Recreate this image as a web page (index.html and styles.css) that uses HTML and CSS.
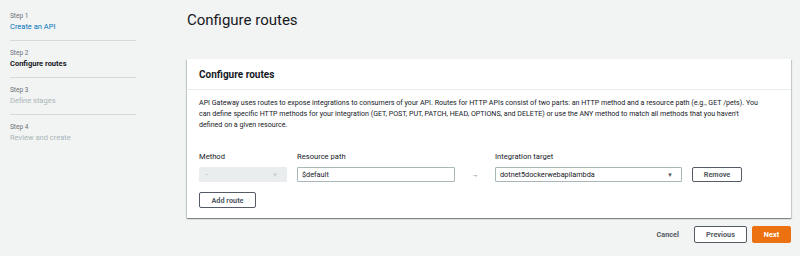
FILE: index.html
```html
<!DOCTYPE html>
<html lang="en">
<head>
  <meta charset="UTF-8" />
  <title>Configure routes</title>
  <link rel="stylesheet" href="styles.css">
</head>
<body>

  <!-- Passos do assistente -->
  <nav class="passos">
    <div class="passo">
      <div class="passo-num">Step 1</div>
      <a class="passo-nome link" href="#">Create an API</a>
    </div>
    <div class="passo">
      <div class="passo-num">Step 2</div>
      <div class="passo-nome atual">Configure routes</div>
    </div>
    <div class="passo">
      <div class="passo-num">Step 3</div>
      <div class="passo-nome inativo">Define stages</div>
    </div>
    <div class="passo ultimo">
      <div class="passo-num">Step 4</div>
      <div class="passo-nome inativo">Review and create</div>
    </div>
  </nav>

  <main class="conteudo">
    <h1 class="titulo">Configure routes</h1>

    <section class="cartao">
      <div class="cartao-topo">Configure routes</div>
      <div class="cartao-corpo">
        <p class="descricao">
          API Gateway uses routes to expose integrations to consumers of your API. Routes for HTTP APIs consist of two parts: an HTTP method and a resource path (e.g., GET /pets). You<br>
          can define specific HTTP methods for your integration (GET, POST, PUT, PATCH, HEAD, OPTIONS, and DELETE) or use the ANY method to match all methods that you haven't<br>
          defined on a given resource.
        </p>

        <div class="rotas">
          <label class="rotulo">Method</label>
          <label class="rotulo">Resource path</label>
          <span></span>
          <label class="rotulo">Integration target</label>
          <span></span>

          <div class="campo seletor desativado">
            <span>-</span>
            <span class="seta">&#9660;</span>
          </div>
          <div class="campo">$default</div>
          <div class="flecha">&rarr;</div>
          <div class="campo seletor">
            <span>dotnet5dockerwebapilambda</span>
            <span class="seta">&#9660;</span>
          </div>
          <button class="botao">Remove</button>
        </div>

        <button class="botao adicionar">Add route</button>
      </div>
    </section>

    <div class="rodape">
      <button class="botao-link">Cancel</button>
      <button class="botao anterior">Previous</button>
      <button class="botao primario">Next</button>
    </div>
  </main>

</body>
</html>
```

FILE: styles.css
```css
body {
  margin: 0;
  padding: 0;
  background-color: #f2f3f3;
  font-family: Roboto, "Open Sans", Arial, sans-serif;
  color: #16191f;
  display: flex;
  height: 256px;
  overflow: hidden;
}

/* Passos */
.passos {
  width: 126px;
  padding: 4px 0 0 10px;
  flex-shrink: 0;
}

.passo {
  padding: 7px 0 8px;
  border-bottom: 1px solid #d5dbdb;
}

.passo.ultimo {
  border-bottom: none;
}

.passo-num {
  font-size: 6.5px;
  line-height: 10px;
  color: #687078;
}

.passo-nome {
  display: block;
  font-size: 7.5px;
  line-height: 11px;
  text-decoration: none;
}

.passo-nome.link {
  color: #0073bb;
}

.passo-nome.atual {
  font-weight: bold;
  color: #16191f;
}

.passo-nome.inativo {
  color: #aab7b8;
}

/* Conteudo */
.conteudo {
  flex: 1;
  padding: 0 9px 0 51px;
}

.titulo {
  margin: 10px 0 29px;
  font-size: 15px;
  line-height: 20px;
  font-weight: normal;
  color: #16191f;
}

.cartao {
  background: white;
  box-shadow: 0 1px 1px 0 rgba(0, 28, 36, 0.3), 1px 1px 1px 0 rgba(0, 28, 36, 0.15), -1px 1px 1px 0 rgba(0, 28, 36, 0.15);
}

.cartao-topo {
  padding: 10px 12px 9px;
  line-height: 11px;
  font-size: 10px;
  font-weight: bold;
  border-bottom: 1px solid #eaeded;
}

.cartao-corpo {
  padding: 7px 12px 10px;
}

.descricao {
  margin: 0 0 22px;
  font-size: 7.1px;
  line-height: 11px;
  color: #16191f;
  white-space: nowrap;
}

.rotas {
  display: grid;
  grid-template-columns: 88px 158px 20px 187px 50px;
  column-gap: 10px;
  row-gap: 5px;
  align-items: center;
}

.rotulo {
  font-size: 7.6px;
  line-height: 10px;
  color: #16191f;
}

.campo {
  box-sizing: border-box;
  height: 15px;
  border: 1px solid #aab7b8;
  border-radius: 1px;
  padding: 0 4px;
  font-size: 7.3px;
  line-height: 13px;
  color: #16191f;
  background: white;
}

.seletor {
  display: flex;
  justify-content: space-between;
}

.seta {
  font-size: 6px;
  color: #545b64;
  margin-right: 4px;
}

.desativado {
  background: #eaeded;
  border-color: #eaeded;
  color: #aab7b8;
  padding-left: 6px;
}

.desativado .seta {
  color: #c6cccc;
}

.flecha {
  text-align: center;
  font-size: 7px;
  color: #545b64;
}

.botao {
  box-sizing: border-box;
  height: 15px;
  background: white;
  border: 1px solid #545b64;
  border-radius: 2px;
  font-family: inherit;
  font-size: 7.3px;
  font-weight: bold;
  color: #545b64;
  padding: 0;
  cursor: pointer;
}

.adicionar {
  margin-top: 10px;
  width: 57px;
  height: 16px;
}

/* Rodape */
.rodape {
  display: flex;
  justify-content: flex-end;
  gap: 5px;
  margin-top: 8px;
}

.botao-link {
  background: none;
  border: none;
  padding: 0 10px;
  font-family: inherit;
  font-size: 7.3px;
  font-weight: bold;
  color: #545b64;
  cursor: pointer;
}

.anterior {
  width: 53px;
  height: 17px;
}

.primario {
  width: 39px;
  height: 17px;
  background: #ec7211;
  border-color: #ec7211;
  color: white;
}
```
